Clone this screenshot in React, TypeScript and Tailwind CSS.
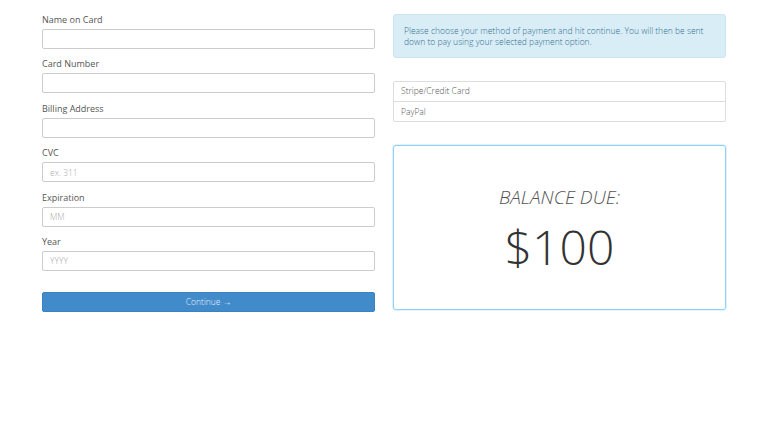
import React from "react";

interface Field {
  label: string;
  placeholder?: string;
}

const fields: Field[] = [
  { label: "Name on Card" },
  { label: "Card Number" },
  { label: "Billing Address" },
  { label: "CVC", placeholder: "ex. 311" },
  { label: "Expiration", placeholder: "MM" },
  { label: "Year", placeholder: "YYYY" },
];

const methods = ["Stripe/Credit Card", "PayPal"];

export default function App() {
  return (
    <div
      className="min-h-[432px] bg-white text-[#333]"
      style={{ fontFamily: '"Open Sans", "Liberation Sans", sans-serif' }}
    >
      <div className="mx-auto flex w-[684px] gap-[18px] pt-[12px]">
        {/* Left: card form */}
        <form className="flex w-[333px] flex-col" onSubmit={(e) => e.preventDefault()}>
          {fields.map((f) => (
            <div key={f.label} className="mb-[7.4px] flex flex-col">
              <label className="mb-[3px] pt-[1px] text-[9px] leading-[13px] text-[#555]">
                {f.label}
              </label>
              <input
                type="text"
                placeholder={f.placeholder}
                className="h-[20px] w-full rounded-[2px] border border-[#ccc] bg-white px-[7px] text-[8.5px] font-light text-[#555] placeholder:text-[#aaa] focus:outline-none"
              />
            </div>
          ))}
          <button
            type="submit"
            className="mt-[13.6px] h-[20px] w-full rounded-[2px] border border-[#3a82c0] bg-[#428bca] text-[8.5px] font-light text-[#e4eef8]"
          >
            Continue →
          </button>
        </form>

        {/* Right: info, methods, balance */}
        <div className="flex w-[333px] flex-col pt-[2px]">
          <div className="rounded-[3px] border border-[#c9e5f2] bg-[#d9edf7] px-[10px] py-[10px] text-[8.5px] font-light leading-[11px] text-[#31708f]">
            Please choose your method of payment and hit continue. You will then be sent
            down to pay using your selected payment option.
          </div>

          <div className="mt-[23px] flex flex-col rounded-[2px] border border-[#ddd]">
            {methods.map((m, i) => (
              <div
                key={m}
                className={`px-[7px] text-[8.5px] font-light text-[#555] ${
                  i > 0 ? "h-[20px] border-t border-[#ddd] leading-[19px]" : "h-[19px] leading-[18px]"
                }`}
              >
                {m}
              </div>
            ))}
          </div>

          <section className="mt-[23px] flex h-[165px] flex-col items-center justify-center rounded-[3px] border border-[#92d0f8] pt-[4px] shadow-[0_0_0_0.5px_#c2e6fc]">
            <div className="text-[19px] font-light italic leading-[24px] text-[#555]">
              BALANCE DUE:
            </div>
            <div className="mt-[10px] text-[48px] font-light leading-[56px] text-[#333]">
              $100
            </div>
          </section>
        </div>
      </div>
    </div>
  );
}
